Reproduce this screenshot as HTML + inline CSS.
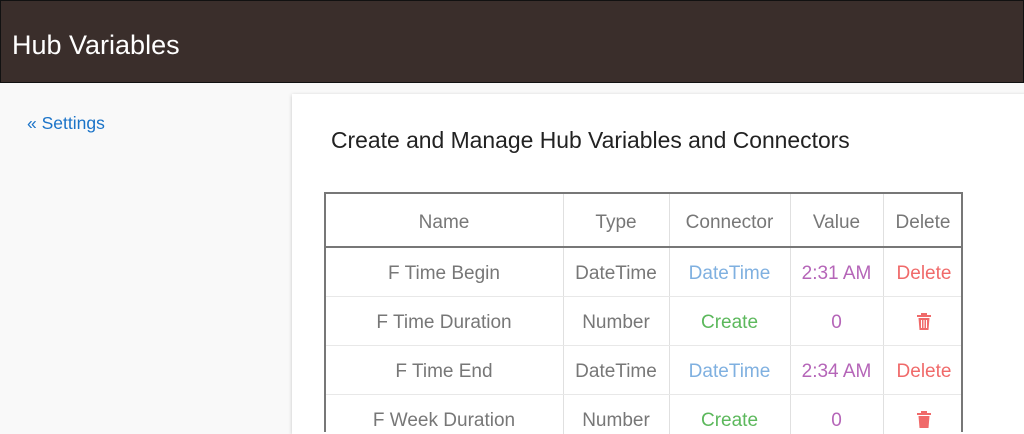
<!DOCTYPE html>
<html><head><style>
*{margin:0;padding:0;box-sizing:border-box}
body{width:1024px;height:417px;overflow:hidden;background:#f9f9f9;font-family:"Liberation Sans",sans-serif;position:relative}
.hdr{position:absolute;left:0;top:0;width:1024px;height:83px;background:#3a2e2b;border:1px solid #111}
.hdr span{position:absolute;left:11px;top:29px;color:#fff;font-size:27px}
.set{position:absolute;left:27px;top:113px;color:#1a73c8;font-size:17.5px}
.card{position:absolute;left:292px;top:94px;width:740px;height:340px;background:#fff;box-shadow:0 1px 4px rgba(0,0,0,.2)}
.title{position:absolute;left:331px;top:127px;font-size:22.9px;color:#222}
.tbl{position:absolute;left:324px;top:192px;width:639px;height:240px;border:2px solid #777;border-bottom:none}
.c{position:absolute;text-align:center;font-size:19px;color:#777;line-height:20px;white-space:nowrap}
.vl{position:absolute;width:1px;background:#e0e0e0}
.hl{position:absolute;height:1px;background:#e8e8e8;left:0;width:635px}
.b{color:#7fb0e0}.g{color:#5cb85c}.p{color:#b565b8}.r{color:#f06a6a}
</style></head><body>
<div class="hdr"><span>Hub Variables</span></div>
<div class="set">« Settings</div>
<div class="card"></div>
<div class="title">Create and Manage Hub Variables and Connectors</div>
<div class="tbl">
<div class="vl" style="left:237px;top:0;height:240px"></div>
<div class="vl" style="left:343px;top:0;height:240px"></div>
<div class="vl" style="left:464px;top:0;height:240px"></div>
<div class="vl" style="left:557px;top:0;height:240px"></div>
<div style="position:absolute;left:0;top:52px;width:635px;height:2px;background:#777"></div>
<div class="hl" style="top:102px"></div>
<div class="hl" style="top:151px"></div>
<div class="hl" style="top:200px"></div>
</div>
<div class="c" style="left:325px;width:238px;top:213px">Name</div>
<div class="c" style="left:563px;width:106px;top:213px">Type</div>
<div class="c" style="left:669px;width:121px;top:213px">Connector</div>
<div class="c" style="left:790px;width:93px;top:213px">Value</div>
<div class="c" style="left:883px;width:80px;top:213px">Delete</div>

<div class="c" style="left:325px;width:238px;top:264px">F Time Begin</div>
<div class="c" style="left:563px;width:106px;top:264px">DateTime</div>
<div class="c b" style="left:669px;width:121px;top:264px">DateTime</div>
<div class="c p" style="left:790px;width:93px;top:264px">2:31 AM</div>
<div class="c r" style="left:883px;width:82px;top:264px">Delete</div>

<div class="c" style="left:325px;width:238px;top:313px">F Time Duration</div>
<div class="c" style="left:563px;width:106px;top:313px">Number</div>
<div class="c g" style="left:669px;width:121px;top:313px">Create</div>
<div class="c p" style="left:790px;width:93px;top:313px">0</div>
<svg style="position:absolute;left:916px;top:312px" width="16" height="19" viewBox="0 0 16 19"><path d="M5 1h6v2H5z M1 3h14v2H1z M2.5 6h11l-1 12h-9z" fill="#f06a6a"/><path d="M5.5 8v8M8 8v8M10.5 8v8" stroke="#fff" stroke-width="1"/></svg>

<div class="c" style="left:325px;width:238px;top:362px">F Time End</div>
<div class="c" style="left:563px;width:106px;top:362px">DateTime</div>
<div class="c b" style="left:669px;width:121px;top:362px">DateTime</div>
<div class="c p" style="left:790px;width:93px;top:362px">2:34 AM</div>
<div class="c r" style="left:883px;width:82px;top:362px">Delete</div>

<div class="c" style="left:325px;width:238px;top:411px">F Week Duration</div>
<div class="c" style="left:563px;width:106px;top:411px">Number</div>
<div class="c g" style="left:669px;width:121px;top:411px">Create</div>
<div class="c p" style="left:790px;width:93px;top:411px">0</div>
<svg style="position:absolute;left:916px;top:410px" width="16" height="19" viewBox="0 0 16 19"><path d="M5 1h6v2H5z M1 3h14v2H1z M2.5 6h11l-1 12h-9z" fill="#f06a6a"/></svg>
</body></html>
